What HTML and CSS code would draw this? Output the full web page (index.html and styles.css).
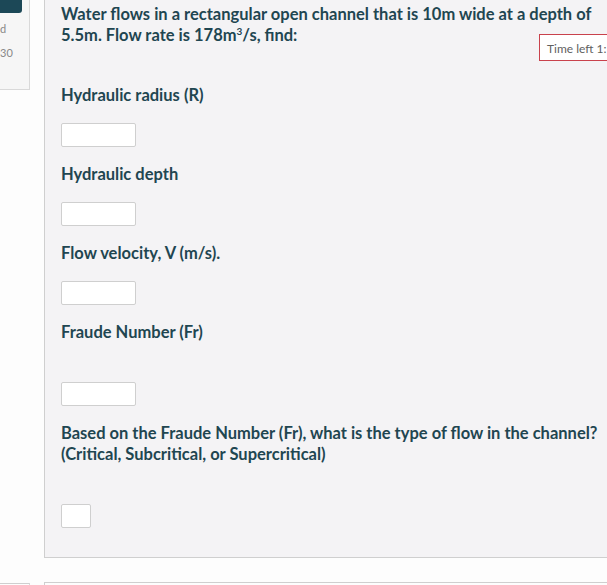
FILE: index.html
```html
<!DOCTYPE html>
<html lang="en">
<head>
    <meta charset="UTF-8">
    <meta name="viewport" content="width=device-width, initial-scale=1.0">
    <title>Quiz attempt</title>
    <link rel="stylesheet" href="styles.css">
</head>
<body>
    <div class="page">
        <div class="sidebar">
            <div class="info-card">
                <div class="nav-button"></div>
                <div class="info-line">d</div>
                <div class="info-line second">30</div>
            </div>
            <div class="info-card next"></div>
        </div>

        <div class="main">
            <div class="question-card">
                <div class="timer">Time left 1:</div>

                <p class="qtext">Water flows in a rectangular open channel that is 10m wide at a depth of 5.5m. Flow rate is 178m<sup>3</sup>/s, find:</p>

                <p class="label first">Hydraulic radius (R)</p>
                <input class="answer" type="text">

                <p class="label">Hydraulic depth</p>
                <input class="answer" type="text">

                <p class="label">Flow velocity, V (m/s).</p>
                <input class="answer" type="text">

                <p class="label">Fraude Number (Fr)</p>
                <input class="answer spaced" type="text">

                <p class="label">Based on the Fraude Number (Fr), what is the type of flow in the channel? (Critical, Subcritical, or Supercritical)</p>
                <input class="answer small spaced" type="text">
            </div>
            <div class="question-card next"></div>
        </div>
    </div>
</body>
</html>
```

FILE: styles.css
```css
body {
    margin: 0;
    background-color: #fdfdfd;
    font-family: Lato, "Open Sans", sans-serif;
    color: #1f4651;
    overflow: hidden;
}

.page {
    display: flex;
    gap: 14px;
}

/* left navigation block */
.sidebar {
    width: 30px;
    flex-shrink: 0;
}

.info-card {
    height: 89px;
    border-right: 1px solid #d9d9d9;
    border-bottom: 1px solid #d9d9d9;
    background-color: #f6f6f6;
}

.info-card.next {
    height: 20px;
    margin-top: 493px;
    border-top: 1px solid #cfcfcf;
    border-bottom: none;
    background-color: #fdfdfd;
}

.nav-button {
    width: 22px;
    height: 13px;
    background-color: #1c4857;
    border-bottom-right-radius: 3px;
}

.info-line {
    font-size: 11px;
    color: #888;
    margin-top: 10px;
    line-height: 12px;
}

.info-line.second {
    margin-top: 12px;
}

/* question area */
.main {
    flex: 1;
}

.question-card {
    position: relative;
    height: 558px;
    padding: 4px 0 0 16px;
    box-sizing: border-box;
    border-left: 1px solid #cfcfcf;
    border-bottom: 1px solid #cfcfcf;
    background-color: #f4f3f5;
    display: flex;
    flex-direction: column;
    align-items: flex-start;
}

.question-card.next {
    height: 40px;
    margin-top: 24px;
    border-top: 1px solid #cfcfcf;
    border-bottom: none;
    background-color: #fdfdfd;
}

.timer {
    position: absolute;
    top: 34px;
    left: 494px;
    width: 90px;
    height: 27px;
    box-sizing: border-box;
    padding: 6px 7px;
    border: 1px solid #c9424c;
    background-color: #fff;
    font-size: 12px;
    color: #5f5f5f;
    white-space: nowrap;
}

.qtext,
.label {
    margin: 0;
    font-size: 16.5px;
    font-weight: bold;
    line-height: 21px;
    max-width: 545px;
}

.qtext sup {
    font-size: 10px;
    line-height: 0;
    vertical-align: 6px;
}

.label {
    margin-top: 17px;
}

.label.first {
    margin-top: 39px;
}

.answer {
    margin: 17px 0 0 0;
    width: 75px;
    height: 24px;
    box-sizing: border-box;
    border: 1px solid #cfcfcf;
    border-radius: 2px;
    background-color: #fff;
    padding: 0;
}

.answer.spaced {
    margin-top: 39px;
}

.answer.small {
    width: 30px;
}
```
